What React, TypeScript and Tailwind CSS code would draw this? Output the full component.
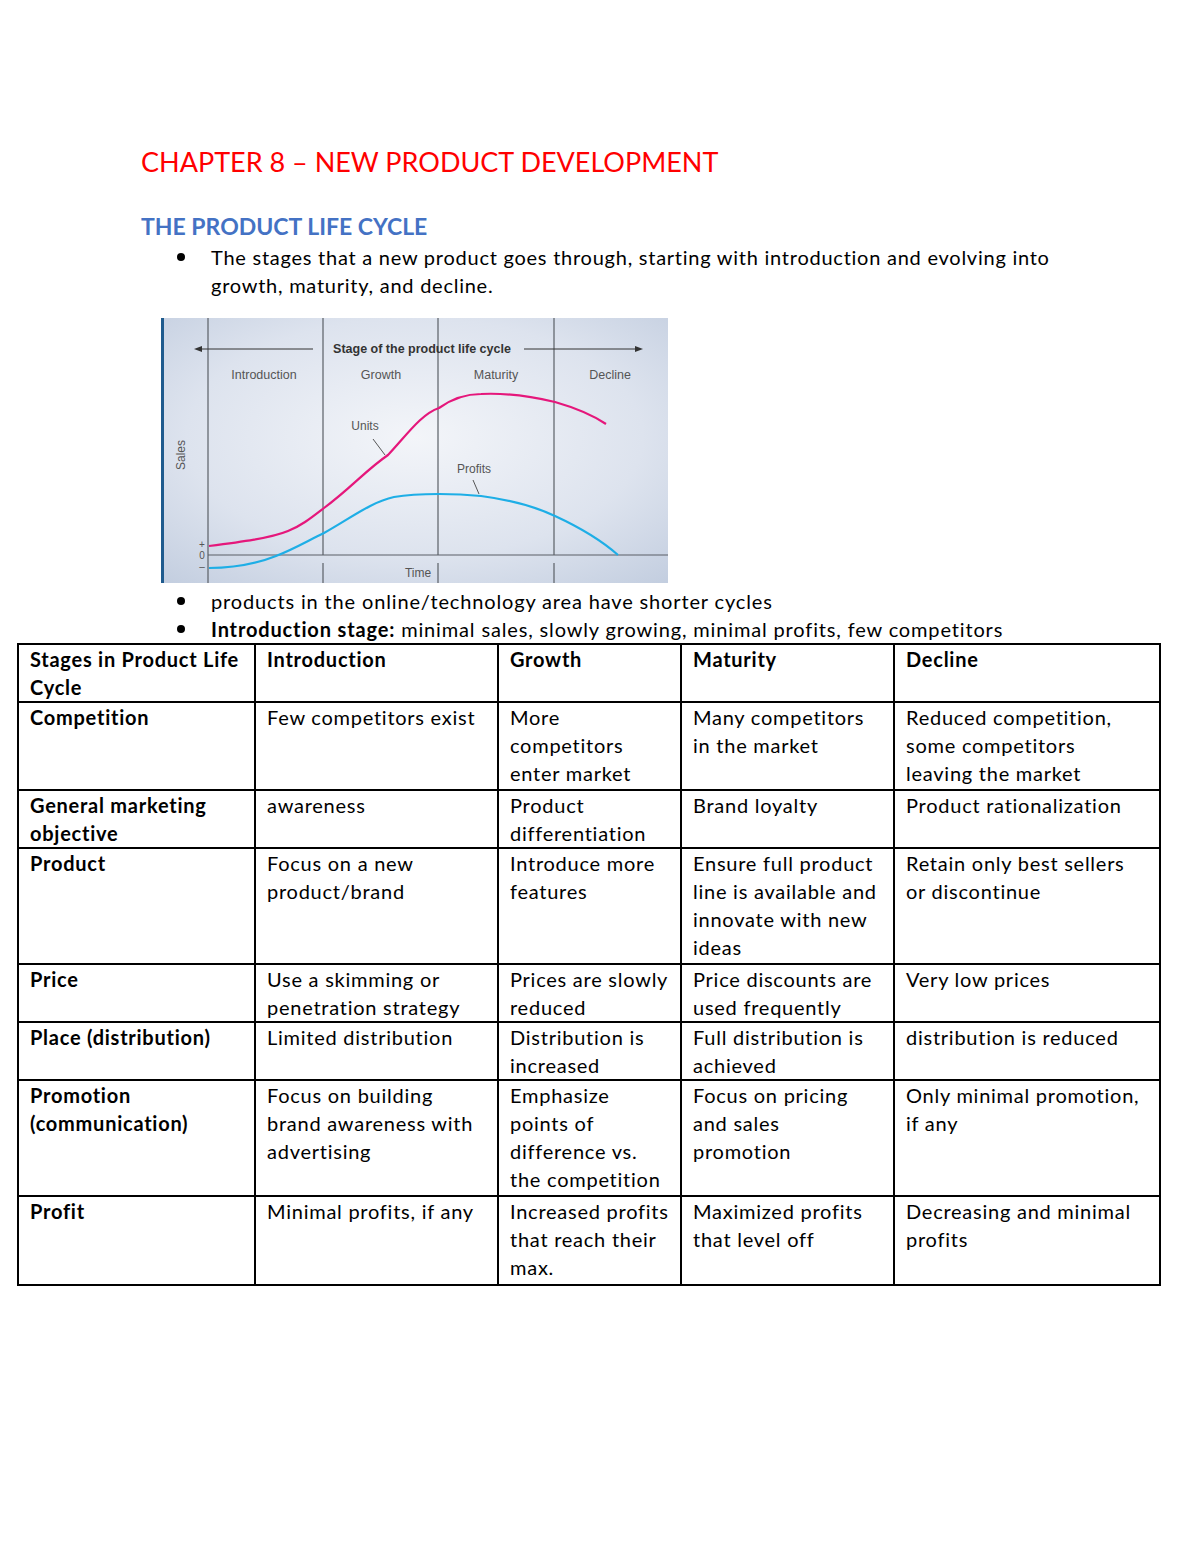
import React from 'react'

const rows: { label: string; cells: string[] }[] = [
  { label: 'Competition', cells: ['Few competitors exist', 'More competitors enter market', 'Many competitors in the market', 'Reduced competition, some competitors leaving the market'] },
  { label: 'General marketing objective', cells: ['awareness', 'Product differentiation', 'Brand loyalty', 'Product rationalization'] },
  { label: 'Product', cells: ['Focus on a new product/brand', 'Introduce more features', 'Ensure full product line is available and innovate with new ideas', 'Retain only best sellers or discontinue'] },
  { label: 'Price', cells: ['Use a skimming or penetration strategy', 'Prices are slowly reduced', 'Price discounts are used frequently', 'Very low prices'] },
  { label: 'Place (distribution)', cells: ['Limited distribution', 'Distribution is increased', 'Full distribution is achieved', 'distribution is reduced'] },
  { label: 'Promotion (communication)', cells: ['Focus on building brand awareness with advertising', 'Emphasize points of difference vs. the competition', 'Focus on pricing and sales promotion', 'Only minimal promotion, if any'] },
  { label: 'Profit', cells: ['Minimal profits, if any', 'Increased profits that reach their max.', 'Maximized profits that level off', 'Decreasing and minimal profits'] },
]

const rowHeights = ['h-[88px]', 'h-[58px]', 'h-[116px]', 'h-[58px]', 'h-[58px]', 'h-[116px]', 'h-[89px]']

function LifeCycleChart() {
  return (
    <svg width="507" height="265" viewBox="0 0 507 265" className="block">
      <defs>
        <radialGradient id="bg" cx="0.5" cy="0.45" r="0.75">
          <stop offset="0" stopColor="#f3f5f9" />
          <stop offset="0.6" stopColor="#dde3ee" />
          <stop offset="1" stopColor="#c2cddf" />
        </radialGradient>
      </defs>
      <rect x="0" y="0" width="507" height="265" fill="url(#bg)" />
      <rect x="0" y="0" width="3" height="265" fill="#1f5b8e" />
      <g stroke="#5a5f66" strokeWidth="1.2">
        <line x1="47" y1="0" x2="47" y2="265" />
        <line x1="162" y1="0" x2="162" y2="237" />
        <line x1="277" y1="0" x2="277" y2="237" />
        <line x1="393" y1="0" x2="393" y2="237" />
        <line x1="162" y1="245" x2="162" y2="265" />
        <line x1="277" y1="245" x2="277" y2="265" />
        <line x1="393" y1="245" x2="393" y2="265" />
        <line x1="47" y1="237" x2="507" y2="237" />
      </g>
      <g stroke="#333" strokeWidth="1">
        <line x1="38" y1="31" x2="152" y2="31" />
        <line x1="363" y1="31" x2="476" y2="31" />
      </g>
      <path d="M33 31 L41 28 L41 34 Z" fill="#333" />
      <path d="M482 31 L474 28 L474 34 Z" fill="#333" />
      <g fontFamily="Liberation Sans, sans-serif" fill="#333">
        <text x="261" y="35" fontSize="12.5" fontWeight="bold" textAnchor="middle">Stage of the product life cycle</text>
        <g fontSize="12.5" fill="#555" textAnchor="middle">
          <text x="103" y="61">Introduction</text>
          <text x="220" y="61">Growth</text>
          <text x="335" y="61">Maturity</text>
          <text x="449" y="61">Decline</text>
        </g>
        <text x="204" y="112" fontSize="12" fill="#555" textAnchor="middle">Units</text>
        <text x="313" y="155" fontSize="12" fill="#555" textAnchor="middle">Profits</text>
        <text x="257" y="259" fontSize="12" fill="#555" textAnchor="middle">Time</text>
        <text x="0" y="0" fontSize="12" fill="#555" textAnchor="middle" transform="translate(24 137) rotate(-90)">Sales</text>
        <text x="41" y="230" fontSize="10" fill="#555" textAnchor="middle">+</text>
        <text x="41" y="241" fontSize="10" fill="#555" textAnchor="middle">0</text>
        <text x="41" y="252" fontSize="10" fill="#555" textAnchor="middle">–</text>
      </g>
      <g stroke="#444" strokeWidth="0.9">
        <line x1="212" y1="121" x2="224" y2="137" />
        <line x1="312" y1="162" x2="318" y2="176" />
      </g>
      <path
        d="M48 228 C80 224 110 220 127 213 C140 208 150 200 163 190 C190 170 205 152 227 137 C245 118 260 96 278 90 C292 80 305 76 320 76 C340 75 360 76 394 84 C415 90 430 96 445 106"
        fill="none"
        stroke="#e5177b"
        strokeWidth="2.2"
      />
      <path
        d="M48 250 C75 250 95 246 115 238 C135 230 148 222 163 215 C190 200 210 184 233 179 C250 176 265 176 278 176 C295 176 310 177 320 178 C350 182 375 189 394 198 C420 210 440 222 457 237"
        fill="none"
        stroke="#1eaee6"
        strokeWidth="2.2"
      />
    </svg>
  )
}

export default function App() {
  return (
    <div className="w-[1200px] min-h-[1553px] bg-white font-['Lato',sans-serif] text-black">
      <div className="pl-[141px] pt-[144px]">
        <h1 className="text-[27px] leading-[36px] text-[#ff0000]">CHAPTER 8 – NEW PRODUCT DEVELOPMENT</h1>
        <h2 className="mt-[31px] text-[23px] leading-[30px] font-bold text-[#4472c4]">THE PRODUCT LIFE CYCLE</h2>
        <ul className="mt-[2px] text-[20px] leading-[28px] tracking-[0.75px]">
          <li className="flex">
            <span className="ml-[36px] mt-[10px] h-[8px] w-[8px] shrink-0 rounded-full bg-black" />
            <span className="ml-[26px] w-[860px]">
              The stages that a new product goes through, starting with introduction and evolving into growth, maturity, and decline.
            </span>
          </li>
        </ul>
        <div className="ml-[20px] mt-[19px]">
          <LifeCycleChart />
        </div>
        <ul className="mt-[4px] text-[20px] leading-[28px] tracking-[0.85px]">
          <li className="flex">
            <span className="ml-[36px] mt-[10px] h-[8px] w-[8px] shrink-0 rounded-full bg-black" />
            <span className="ml-[26px]">products in the online/technology area have shorter cycles</span>
          </li>
          <li className="flex">
            <span className="ml-[36px] mt-[10px] h-[8px] w-[8px] shrink-0 rounded-full bg-black" />
            <span className="ml-[26px]">
              <b>Introduction stage:</b> minimal sales, slowly growing, minimal profits, few competitors
            </span>
          </li>
        </ul>
      </div>
      <table className="ml-[17px] w-[1142px] table-fixed border-collapse border-2 border-black text-[20px] leading-[28px] tracking-[0.75px]">
        <colgroup>
          <col className="w-[237px]" />
          <col className="w-[243px]" />
          <col className="w-[183px]" />
          <col className="w-[213px]" />
          <col className="w-[266px]" />
        </colgroup>
        <tbody>
          <tr className="h-[58px] font-bold">
            {['Stages in Product Life Cycle', 'Introduction', 'Growth', 'Maturity', 'Decline'].map((h) => (
              <td key={h} className="border-2 border-black px-[11px] align-top">{h}</td>
            ))}
          </tr>
          {rows.map((r, i) => (
            <tr key={r.label} className={rowHeights[i]}>
              <td className="border-2 border-black px-[11px] align-top font-bold">{r.label}</td>
              {r.cells.map((c, j) => (
                <td key={j} className="border-2 border-black px-[11px] align-top">{c}</td>
              ))}
            </tr>
          ))}
        </tbody>
      </table>
    </div>
  )
}
